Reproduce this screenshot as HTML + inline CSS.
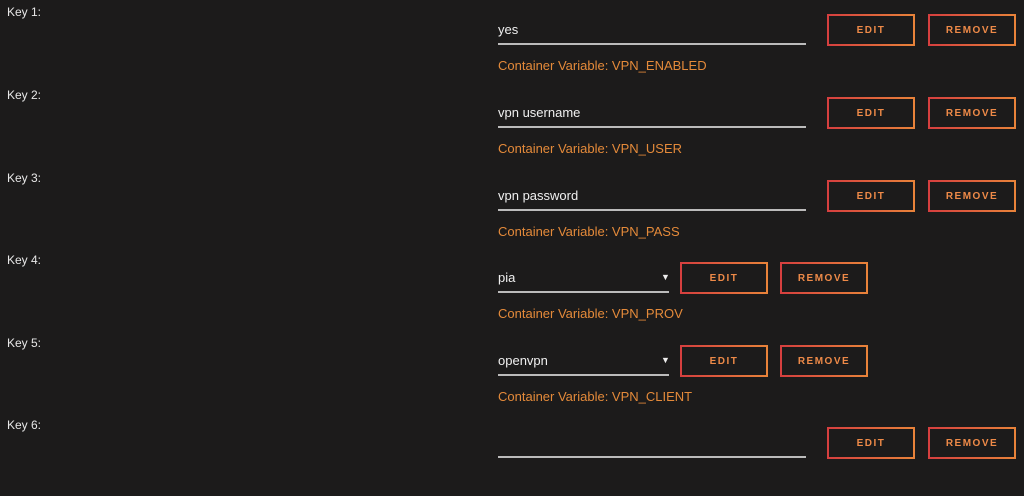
<!DOCTYPE html>
<html><head><style>
body{margin:0;background:#1c1b1b;width:1024px;height:466px;overflow:hidden;position:relative;font-family:"Liberation Sans",sans-serif;}
.row{position:absolute;left:0;width:1024px;height:83px}
.lbl{position:absolute;left:7px;top:5px;font-size:12px;color:#e8e8e8}
.val{position:absolute;left:498px;top:22px;font-size:13px;color:#f0f0f0}
.ul{position:absolute;left:498px;top:43px;height:2px;background:#bbb}
.help{position:absolute;left:498px;top:58px;font-size:13px;color:#e48a3a}
.btn{position:absolute;top:14px;height:28px;border:2px solid;border-image:linear-gradient(90deg,#d63f3f,#e8833a) 1;font-size:10px;font-weight:bold;letter-spacing:1.5px;color:#ee8a48;display:flex;align-items:center;justify-content:center}
.arr{position:absolute;left:661px;top:24px;font-size:9px;color:#eee}
</style></head><body>
<div class="row" style="top:0"><div class="lbl">Key 1:</div><div class="val">yes</div><div class="ul" style="width:308px"></div><div class="help">Container Variable: VPN_ENABLED</div><div class="btn" style="left:827px;width:84px">EDIT</div><div class="btn" style="left:928px;width:84px">REMOVE</div></div>
<div class="row" style="top:83px"><div class="lbl">Key 2:</div><div class="val">vpn username</div><div class="ul" style="width:308px"></div><div class="help">Container Variable: VPN_USER</div><div class="btn" style="left:827px;width:84px">EDIT</div><div class="btn" style="left:928px;width:84px">REMOVE</div></div>
<div class="row" style="top:166px"><div class="lbl">Key 3:</div><div class="val">vpn password</div><div class="ul" style="width:308px"></div><div class="help">Container Variable: VPN_PASS</div><div class="btn" style="left:827px;width:84px">EDIT</div><div class="btn" style="left:928px;width:84px">REMOVE</div></div>
<div class="row" style="top:248px"><div class="lbl">Key 4:</div><div class="val">pia</div><div class="arr">▼</div><div class="ul" style="width:171px"></div><div class="help">Container Variable: VPN_PROV</div><div class="btn" style="left:680px;width:84px">EDIT</div><div class="btn" style="left:780px;width:84px">REMOVE</div></div>
<div class="row" style="top:331px"><div class="lbl">Key 5:</div><div class="val">openvpn</div><div class="arr">▼</div><div class="ul" style="width:171px"></div><div class="help">Container Variable: VPN_CLIENT</div><div class="btn" style="left:680px;width:84px">EDIT</div><div class="btn" style="left:780px;width:84px">REMOVE</div></div>
<div class="row" style="top:413px"><div class="lbl">Key 6:</div><div class="ul" style="width:308px"></div><div class="btn" style="left:827px;width:84px">EDIT</div><div class="btn" style="left:928px;width:84px">REMOVE</div></div>
</body></html>
